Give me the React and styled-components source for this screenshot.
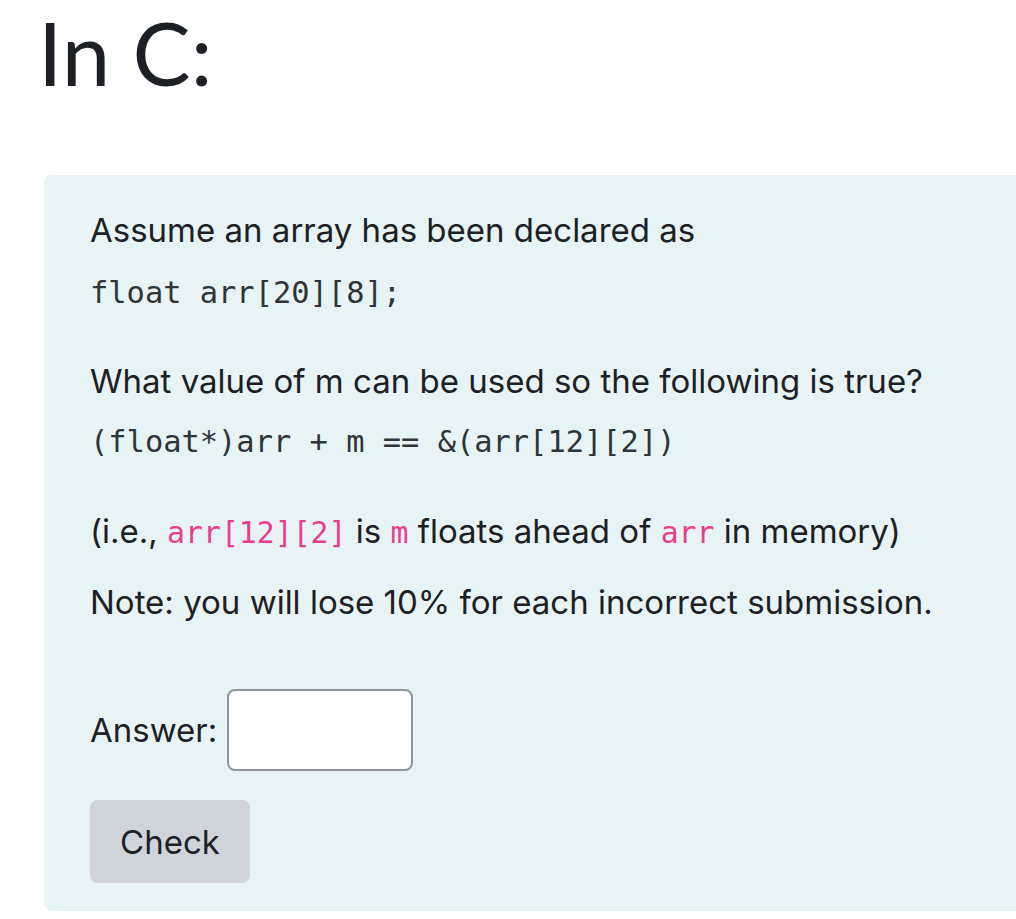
import React from 'react';
import styled, { createGlobalStyle } from 'styled-components';

const GlobalStyle = createGlobalStyle`
  html, body {
    margin: 0;
    padding: 0;
    background: #ffffff;
    overflow: hidden;
  }
  body {
    font-family: Inter, "Liberation Sans", Arial, sans-serif;
    color: #1d2125;
  }
`;

const Page = styled.div`
  width: 1016px;
  height: 919px;
  overflow: hidden;
`;

const Title = styled.h1`
  margin: 0;
  padding: 3px 0 0 38px;
  height: 165px;
  box-sizing: border-box;
  font-family: Lato, "Open Sans", sans-serif;
  font-weight: 400;
  font-size: 87px;
  line-height: 100px;
  color: #1d2125;
`;

const Formulation = styled.div`
  margin-left: 44px;
  margin-top: 10px;
  width: 1000px;
  background: #e7f3f5;
  border-radius: 8px;
  padding: 31px 46px 28px;
  box-sizing: border-box;
`;

const Text = styled.p`
  margin: 0 0 ${p => p.$gap || 0}px;
  font-size: 33px;
  line-height: 48px;
`;

const CodeLine = styled.pre`
  margin: 0 0 ${p => p.$gap || 0}px;
  font-family: "DejaVu Sans Mono", "Liberation Mono", monospace;
  font-size: 30.4px;
  line-height: 48px;
  color: #2f3438;
`;

const Code = styled.code`
  font-family: "DejaVu Sans Mono", "Liberation Mono", monospace;
  font-size: 29.8px;
  color: #e83e8c;
`;

const AnswerRow = styled.div`
  display: flex;
  align-items: center;
  gap: 10px;
  margin-bottom: 29px;
`;

const Label = styled.label`
  font-size: 33px;
  line-height: 48px;
`;

const Input = styled.input`
  width: 186px;
  height: 82px;
  box-sizing: border-box;
  border: 2px solid #8f959e;
  border-radius: 8px;
  background: #ffffff;
  font-size: 30px;
`;

const CheckButton = styled.button`
  width: 160px;
  height: 83px;
  border: none;
  border-radius: 8px;
  background: #ced4da;
  color: #1d2125;
  font-family: Inter, "Liberation Sans", Arial, sans-serif;
  font-size: 33px;
  padding: 0;
`;

export default function App() {
  return (
    <Page>
      <GlobalStyle />
      <Title>In C:</Title>
      <Formulation>
        <Text $gap={15}>Assume an array has been declared as</Text>
        <CodeLine $gap={40}>float arr[20][8];</CodeLine>
        <Text $gap={13}>What value of m can be used so the following is true?</Text>
        <CodeLine $gap={41}>(float*)arr + m == &amp;(arr[12][2])</CodeLine>
        <Text $gap={21}>
          (i.e., <Code>arr[12][2]</Code> is <Code>m</Code> floats ahead of <Code>arr</Code> in memory)
        </Text>
        <Text $gap={63}>Note: you will lose 10% for each incorrect submission.</Text>
        <AnswerRow>
          <Label>Answer:</Label>
          <Input type="text" />
        </AnswerRow>
        <CheckButton>Check</CheckButton>
      </Formulation>
    </Page>
  );
}
